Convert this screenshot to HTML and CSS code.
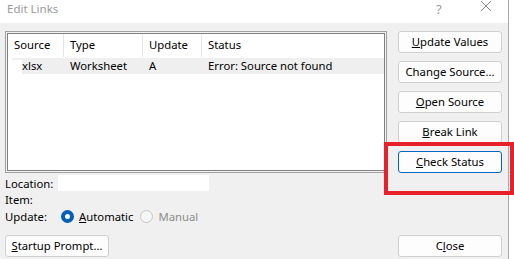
FILE: index.html
```html
<!DOCTYPE html>
<html lang="en">
<head>
<meta charset="UTF-8">
<title>Edit Links</title>
<link rel="stylesheet" href="styles.css">
</head>
<body>

<div class="dialog">

<div class="titlebar">
    <span class="title">Edit Links</span>
    <span class="help">?</span>
    <span class="close-x">
        <svg width="12" height="12" viewBox="0 0 12 12"><path d="M1 1L11 11M11 1L1 11" stroke="#888" stroke-width="1" fill="none"/></svg>
    </span>
</div>

<div class="content">

<div class="left">

    <div class="list">
        <div class="list-inner">
            <div class="row head">
                <div class="col c1">Source</div>
                <div class="col c2">Type</div>
                <div class="col c3">Update</div>
                <div class="col c4">Status</div>
            </div>
            <div class="row item">
                <div class="col c1"><span class="hidden-name"></span>xlsx</div>
                <div class="col c2">Worksheet</div>
                <div class="col c3">A</div>
                <div class="col c4">Error: Source not found</div>
            </div>
        </div>
    </div>

    <div class="fields">
        <div class="field">
            <span class="label">Location:</span>
            <span class="location-box"></span>
        </div>
        <div class="field">
            <span class="label">Item:</span>
        </div>
        <div class="field">
            <span class="label">Update:</span>
            <span class="radio on"></span>
            <span class="radio-text"><u>A</u>utomatic</span>
            <span class="radio off"></span>
            <span class="radio-text disabled">Manual</span>
        </div>
    </div>

    <button class="btn startup"><u>S</u>tartup Prompt...</button>

</div>

<div class="right">
    <button class="btn"><u>U</u>pdate Values</button>
    <button class="btn">Chan<u>g</u>e Source...</button>
    <button class="btn"><u>O</u>pen Source</button>
    <button class="btn"><u>B</u>reak Link</button>
    <button class="btn focus"><u>C</u>heck Status</button>
    <button class="btn close">C<u>l</u>ose</button>
</div>

</div>

<div class="highlight"></div>

</div>

<div class="sheet-edge"></div>

</body>
</html>
```

FILE: styles.css
```css
*{
    box-sizing:border-box;
}

body{
    margin:0;
    width:514px;
    height:259px;
    overflow:hidden;
    background:white;
    font-family:"Noto Sans","Open Sans",sans-serif;
    font-size:11.3px;
    color:#000;
    display:flex;
}

.dialog{
    position:relative;
    width:509px;
    height:259px;
    background:#f0f0f0;
    border-right:1px solid #a8a8a8;
}

.sheet-edge{
    flex:1;
    background:white;
}

.titlebar{
    height:23px;
    background:white;
    display:flex;
    align-items:center;
    padding-left:7px;
}

.title{
    color:#999;
    font-size:11.5px;
    flex:1;
    margin-top:-6px;
}

.help{
    color:#999;
    font-size:13px;
    width:44px;
    margin-top:-6px;
}

.close-x{
    width:28px;
    margin-top:-8px;
}

.content{
    display:flex;
    padding:8px 0 0 5px;
    height:236px;
}

.left{
    width:382px;
    display:flex;
    flex-direction:column;
}

.list{
    height:142px;
    border:1px solid #a0a0a0;
    padding:1px;
    background:#f4f4f4;
}

.list-inner{
    height:100%;
    border:1px solid #808080;
    background:white;
}

.row{
    display:flex;
    line-height:16px;
}

.row.head{
    height:23px;
    align-items:center;
}

.row.head .col{
    height:23px;
    line-height:22px;
    border-right:1px solid #e5e5e5;
}

.row.head .c4{
    border-right:none;
}

.row.item{
    margin-top:1px;
    margin-left:4px;
    background:#efefef;
    height:16px;
}

.col{
    padding-left:6px;
    white-space:nowrap;
}

.c1{ width:56px; }
.c2{ width:79px; }
.c3{ width:59px; }
.c4{ flex:1; }

.row.item .c1{
    width:52px;
    padding-left:0;
    display:flex;
}

.hidden-name{
    display:inline-block;
    width:10px;
    height:14px;
    margin-top:2px;
    background:white;
}

.fields{
    padding-top:2px;
}

.field{
    display:flex;
    align-items:center;
    height:17px;
}

.field:first-child{
    height:16px;
}

.label{
    width:53px;
}

.location-box{
    width:151px;
    height:16px;
    background:white;
}

.radio{
    width:13px;
    height:13px;
    border-radius:50%;
    margin-left:3px;
}

.radio.on{
    border:4px solid #005fb8;
    background:white;
}

.radio.off{
    border:1px solid #c6c6c6;
    background:#f6f6f6;
    margin-left:7px;
}

.radio-text{
    margin-left:5px;
}

.radio-text.disabled{
    color:#8c8c8c;
}

.btn{
    font-family:inherit;
    font-size:11.3px;
    color:#000;
    background:#fdfdfd;
    border:1px solid #d0d0d0;
    border-radius:3px;
    height:22px;
    padding:0;
    line-height:18px;
}

.startup{
    width:104px;
    margin-top:auto;
    margin-bottom:2px;
}

.right{
    margin-left:11px;
    width:104px;
    display:flex;
    flex-direction:column;
    gap:8px;
}

.right .btn{
    width:104px;
}

.btn.focus{
    border:1px solid #0067c0;
}

.btn.close{
    margin-top:auto;
    margin-bottom:2px;
}

.highlight{
    position:absolute;
    left:384px;
    top:142px;
    width:130px;
    height:53px;
    border:4px solid #e8202a;
}
```
